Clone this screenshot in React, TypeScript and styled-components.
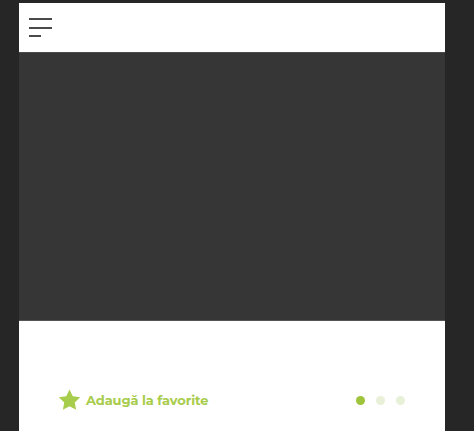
import React from "react";
import styled, { createGlobalStyle } from "styled-components";

const Global = createGlobalStyle`
  html, body { margin: 0; padding: 0; background: #262626; height: 100%; overflow: hidden; }
  body { font-family: "Montserrat", "Lato", "Liberation Sans", sans-serif; }
`;

const Page = styled.div`
  padding: 3px 0 0 19px;
  width: 426px;
`;

const Header = styled.header`
  height: 49px;
  background: #fff;
  display: flex;
  align-items: center;
  padding-left: 10px;
  border-bottom: 1px solid #4a4a4a;
`;

const Burger = styled.button`
  width: 24px;
  height: 19px;
  padding: 0;
  border: none;
  background: none;
  display: flex;
  flex-direction: column;
  justify-content: space-between;
`;

const Line = styled.span<{ $w: number }>`
  display: block;
  height: 2px;
  width: ${(p) => p.$w}px;
  background: #4a4a4a;
`;

const Hero = styled.div`
  height: 267px;
  background: #363636;
  border-bottom: 1px solid #555;
`;

const Bottom = styled.div`
  background: #fff;
  height: 120px;
  display: flex;
  align-items: flex-start;
  justify-content: space-between;
  padding: 68px 40px 0 39px;
  box-sizing: border-box;
`;

const Fav = styled.div`
  display: flex;
  align-items: center;
  gap: 5px;
  color: #a8cc4c;
  font-weight: 700;
  font-size: 13px;
  letter-spacing: -0.1px;
`;

const Dots = styled.div`
  display: flex;
  gap: 11px;
  margin-top: 7px;
`;

const Dot = styled.span<{ $active?: boolean }>`
  width: 9px;
  height: 9px;
  border-radius: 50%;
  background: ${(p) => (p.$active ? "#9dc43a" : "#e9f0d8")};
`;

export default function App() {
  return (
    <>
      <Global />
      <Page>
        <Header>
          <Burger aria-label="menu">
            <Line $w={23} />
            <Line $w={23} />
            <Line $w={12} />
          </Burger>
        </Header>
        <Hero />
        <Bottom>
          <Fav>
            <svg width="23" height="22" viewBox="0 0 24 23">
              <path
                d="M12 0.5l3.4 7.1 7.8 1-5.7 5.4 1.4 7.7L12 18l-6.9 3.7 1.4-7.7L0.8 8.6l7.8-1z"
                fill="#a8cc4c"
              />
            </svg>
            <span>Adaugă la favorite</span>
          </Fav>
          <Dots>
            <Dot $active />
            <Dot />
            <Dot />
          </Dots>
        </Bottom>
      </Page>
    </>
  );
}
